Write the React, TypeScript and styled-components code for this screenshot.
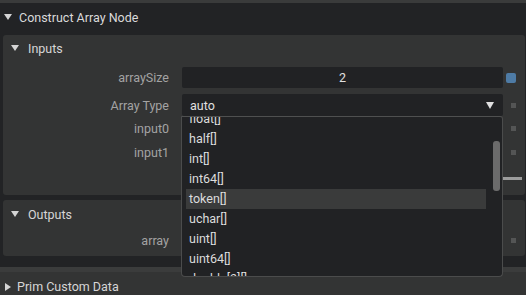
import React from 'react'
import styled, { createGlobalStyle } from 'styled-components'

const GlobalStyle = createGlobalStyle`
  html, body { margin: 0; padding: 0; background: #222325; }
  body { font-family: Roboto, "Noto Sans", sans-serif; }
`

const types = ['float[]', 'half[]', 'int[]', 'int64[]', 'token[]', 'uchar[]', 'uint[]', 'uint64[]', 'double[2][]']

const Page = styled.div`
  width: 526px;
  height: 295px;
  overflow: hidden;
  background: #222325;
  border-top: 3px solid #3a3b3b;
  box-sizing: border-box;
  display: flex;
  flex-direction: column;
`

const Caret = styled.span<{ $right?: boolean }>`
  display: inline-block;
  width: 0;
  height: 0;
  ${p => p.$right
    ? `border-top: 4px solid transparent; border-bottom: 4px solid transparent; border-left: 6px solid #d4d4d4;`
    : `border-left: 4px solid transparent; border-right: 4px solid transparent; border-top: 6px solid #d4d4d4;`}
`

const NodeHeader = styled.div`
  height: 32px;
  box-sizing: border-box;
  padding: 0 0 4px 4px;
  flex: none;
  display: flex;
  align-items: center;
  gap: 7px;
  color: #dadada;
  font-size: 12.5px;
`

const Panel = styled.div<{ $h: number }>`
  margin-left: 3px;
  margin-right: 1px;
  height: ${p => p.$h}px;
  flex: none;
  background: #333434;
  border-radius: 3px;
  position: relative;
`

const PanelHeader = styled.div<{ $h?: number }>`
  height: ${p => p.$h ?? 26}px;
  display: flex;
  align-items: center;
  gap: 9px;
  padding-left: 8px;
  color: #d6d6d6;
  font-size: 12.5px;
`

const Rows = styled.div`
  display: flex;
  flex-direction: column;
  gap: 1px;
  padding-top: 6px;
`

const Row = styled.div<{ $h: number; $pull?: number }>`
  display: grid;
  grid-template-columns: 179px 321px 22px;
  align-items: center;
  height: ${p => p.$h}px;
  margin-top: ${p => -(p.$pull ?? 0)}px;
  margin-bottom: 5px;
`

const Label = styled.div`
  text-align: right;
  padding-right: 13px;
  color: #a3a3a3;
  font-size: 12.5px;
`

const Field = styled.div<{ $center?: boolean }>`
  height: 100%;
  background: #212224;
  border-radius: 2px;
  display: flex;
  align-items: center;
  justify-content: ${p => (p.$center ? 'center' : 'space-between')};
  padding: 0 8px;
  box-sizing: border-box;
  color: #e0e0e0;
  font-size: 12.5px;
  position: relative;
`

const DropArrow = styled(Caret)`
  border-top-width: 7px;
  border-left-width: 4.5px;
  border-right-width: 4.5px;
  margin-right: 1px;
  border-top-color: #e0e0e0;
`

const Indicator = styled.div<{ $kind?: 'blue' | 'dot' }>`
  width: ${p => (p.$kind === 'blue' ? 10 : 5)}px;
  height: ${p => (p.$kind === 'blue' ? 10 : 5)}px;
  margin-left: ${p => (p.$kind === 'blue' ? 3 : 8)}px;
  background: ${p => (p.$kind === 'blue' ? '#4e7ba5' : '#545555')};
  border-radius: ${p => (p.$kind === 'blue' ? 2 : 0)}px;
`

const ResizeBar = styled.div`
  position: absolute;
  left: 500px;
  top: 142px;
  width: 19px;
  height: 3px;
  background: #9c9c9c;
`

const List = styled.div`
  position: absolute;
  left: -1px;
  top: 100%;
  width: 322px;
  height: 161px;
  background: #212224;
  border: 1px solid #4b4c4c;
  border-top-color: #4f5050;
  border-radius: 0 3px 4px 4px;
  box-sizing: border-box;
  overflow: hidden;
  z-index: 2;
`

const ListInner = styled.div`
  margin-top: -8px;
  padding: 0 16px 0 4px;
`

const Item = styled.div<{ $active?: boolean }>`
  height: 20px;
  line-height: 20px;
  padding-left: 3px;
  color: #dcdcdc;
  font-size: 12.5px;
  background: ${p => (p.$active ? '#3a3b3b' : 'transparent')};
`

const Scrollbar = styled.div`
  position: absolute;
  right: 2px;
  top: 24px;
  width: 7px;
  height: 50px;
  border-radius: 3px;
  background: #6b6b6b;
`

const Gap = styled.div<{ $h: number }>`
  height: ${p => p.$h}px;
  flex: none;
`

const Footer = styled.div`
  flex: 1;
  background: #333434;
  border-top: 5px solid #3b3c3c;
  display: flex;
  align-items: flex-start;
  gap: 6px;
  padding: 8px 0 0 5px;
  line-height: 14px;
  color: #d6d6d6;
  font-size: 12.5px;
`

const FooterCaret = styled(Caret)`
  margin-top: 3px;
`

export default function App() {
  return (
    <Page>
      <GlobalStyle />
      <NodeHeader>
        <Caret />
        Construct Array Node
      </NodeHeader>
      <Panel $h={160}>
        <PanelHeader>
          <Caret />
          Inputs
        </PanelHeader>
        <Rows>
          <Row $h={21}>
            <Label>arraySize</Label>
            <Field $center>2</Field>
            <Indicator $kind="blue" />
          </Row>
          <Row $h={22}>
            <Label>Array Type</Label>
            <Field>
              auto
              <DropArrow />
              <List>
                <ListInner>
                  {types.map(t => (
                    <Item key={t} $active={t === 'token[]'}>{t}</Item>
                  ))}
                </ListInner>
                <Scrollbar />
              </List>
            </Field>
            <Indicator $kind="dot" />
          </Row>
          <Row $h={18} $pull={3}>
            <Label>input0</Label>
            <div />
            <Indicator $kind="dot" />
          </Row>
          <Row $h={18}>
            <Label>input1</Label>
            <div />
            <Indicator $kind="dot" />
          </Row>
        </Rows>
        <ResizeBar />
      </Panel>
      <Gap $h={5} />
      <Panel $h={56}>
        <PanelHeader $h={28}>
          <Caret />
          Outputs
        </PanelHeader>
        <Row $h={24}>
          <Label>array</Label>
          <div />
          <Indicator $kind="dot" />
        </Row>
      </Panel>
      <Gap $h={11} />
      <Footer>
        <FooterCaret $right />
        Prim Custom Data
      </Footer>
    </Page>
  )
}
